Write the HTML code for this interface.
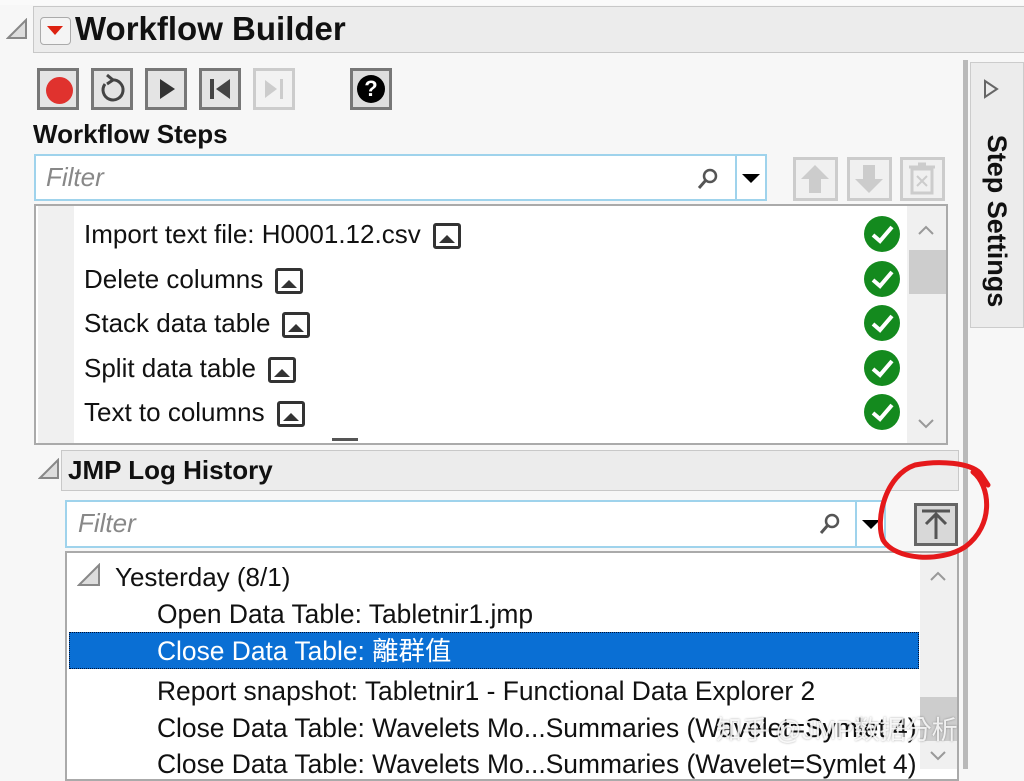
<!DOCTYPE html>
<html><head><meta charset="utf-8"><style>
*{box-sizing:border-box;margin:0;padding:0}
body{width:1024px;height:769px;overflow:hidden;background:#f7f7f7;font-family:"Liberation Sans","Noto Sans CJK TC",sans-serif;position:relative;color:#111}
.a{position:absolute}
.btn{position:absolute;top:68px;width:42px;height:42px;border:3px solid #777;background:#e4e4e4}
.row{position:absolute;left:84px;font-size:26px;line-height:30px;white-space:nowrap}
.img{display:inline-block;width:28px;height:26px;border:3px solid #333;border-radius:3px;vertical-align:middle;margin-left:12px;position:relative;background:#fff}
.img:after{content:"";position:absolute;left:3px;bottom:3px;border-left:8px solid transparent;border-right:8px solid transparent;border-bottom:8px solid #333}
.chk{position:absolute;left:864px;width:36px;height:36px;border-radius:50%;background:#148a1e}
.lr{position:absolute;left:157px;font-size:26.4px;line-height:30px;white-space:nowrap}
</style></head><body>
<div class="a" style="left:0;top:0;width:1024px;height:5px;background:#fafafa"></div>
<svg class="a" style="left:6px;top:18px" width="24" height="22"><path d="M2 20 L20 2 L20 20 Z" fill="#ddd" stroke="#888" stroke-width="2"/></svg>
<div class="a" style="left:33px;top:6px;width:995px;height:47px;background:#ececec;border:1px solid #c8c8c8"></div>
<div class="a" style="left:40px;top:17px;width:31px;height:28px;border:1px solid #aaa;border-radius:4px;background:#f4f4f4"></div>
<svg class="a" style="left:45px;top:24px" width="20" height="12"><path d="M2 2 L18 2 L10 11Z" fill="#d21"/></svg>
<div class="a" style="left:75px;top:10px;font-size:33px;line-height:38px;font-weight:bold">Workflow Builder</div>

<div class="btn" style="left:37px"><div class="a" style="left:6px;top:6px;width:27px;height:27px;border-radius:50%;background:#e0322e"></div></div>
<div class="btn" style="left:91px"><svg width="36" height="36"><path d="M11 13 A10 10 0 1 0 18 9" fill="none" stroke="#444" stroke-width="3"/><path d="M13 4 L19 9 L13 13" fill="none" stroke="#444" stroke-width="3"/></svg></div>
<div class="btn" style="left:145px"><svg width="36" height="36"><path d="M12 8 L27 18 L12 28Z" fill="#333"/></svg></div>
<div class="btn" style="left:199px"><svg width="36" height="36"><rect x="8" y="8" width="4" height="20" fill="#444"/><path d="M28 8 L14 18 L28 28Z" fill="#444"/></svg></div>
<div class="btn" style="left:253px;border-color:#ccc;background:#f2f2f2"><svg width="36" height="36"><path d="M9 9 L21 18 L9 27Z" fill="#ccc"/><rect x="24" y="8" width="3" height="20" fill="#ccc"/></svg></div>
<div class="btn" style="left:350px;background:#ddd"><div class="a" style="left:4px;top:4px;width:28px;height:28px;border-radius:50%;background:#000;color:#fff;font-weight:bold;font-size:22px;text-align:center;line-height:28px">?</div></div>

<div class="a" style="left:33px;top:119px;font-size:26px;line-height:30px;font-weight:bold">Workflow Steps</div>
<div class="a" style="left:34px;top:154px;width:733px;height:47px;background:#fff;border:2px solid #9fd3ec"></div>
<div class="a" style="left:735px;top:154px;width:2px;height:47px;background:#9fd3ec"></div>
<div class="a" style="left:46px;top:162px;font-size:26px;line-height:30px;font-style:italic;color:#888">Filter</div>
<svg class="a" style="left:696px;top:167px" width="24" height="24"><circle cx="14" cy="9" r="6" fill="none" stroke="#555" stroke-width="2.5"/><path d="M10 13 L3 21" stroke="#555" stroke-width="3"/></svg>
<svg class="a" style="left:740px;top:172px" width="22" height="12"><path d="M2 2 L20 2 L11 11Z" fill="#000"/></svg>
<div class="a" style="left:793px;top:157px;width:45px;height:44px;border:3px solid #ccc;background:#f0f0f0"><svg width="39" height="38"><path d="M19 5 L33 19 L25 19 L25 33 L13 33 L13 19 L5 19Z" fill="#ccc"/></svg></div>
<div class="a" style="left:847px;top:157px;width:45px;height:44px;border:3px solid #ccc;background:#f0f0f0"><svg width="39" height="38"><path d="M19 33 L33 19 L25 19 L25 5 L13 5 L13 19 L5 19Z" fill="#ccc"/></svg></div>
<div class="a" style="left:900px;top:157px;width:45px;height:44px;border:3px solid #ccc;background:#f0f0f0"><svg width="39" height="38"><rect x="9" y="9" width="20" height="24" fill="none" stroke="#ccc" stroke-width="3"/><path d="M6 7 H32 M15 4 H23" stroke="#ccc" stroke-width="3"/><path d="M14 16 L24 26 M24 16 L14 26" stroke="#ccc" stroke-width="2"/></svg></div>

<div class="a" style="left:34px;top:204px;width:914px;height:241px;background:#fff;border:2px solid #aaa;overflow:hidden">
<div class="a" style="left:2px;top:0;width:36px;height:240px;background:#f0f0f0"></div>
<div class="a" style="left:871px;top:0;width:40px;height:240px;background:#f0f0f0"></div>
<div class="a" style="left:873px;top:44px;width:38px;height:44px;background:#cdcdcd"></div>
<svg class="a" style="left:880px;top:18px" width="20" height="12"><path d="M3 10 L10 3 L17 10" fill="none" stroke="#999" stroke-width="2"/></svg>
<svg class="a" style="left:880px;top:212px" width="20" height="12"><path d="M3 2 L10 9 L17 2" fill="none" stroke="#999" stroke-width="2"/></svg>
<div class="a" style="left:296px;top:232px;width:26px;height:3px;background:#555"></div>
</div>
<div class="row" style="top:219px">Import text file: H0001.12.csv<span class="img"></span></div>
<div class="row" style="top:264px">Delete columns<span class="img"></span></div>
<div class="row" style="top:308px">Stack data table<span class="img"></span></div>
<div class="row" style="top:353px">Split data table<span class="img"></span></div>
<div class="row" style="top:397px">Text to columns<span class="img"></span></div>
<div class="chk" style="top:216px"></div><div class="chk" style="top:261px"></div><div class="chk" style="top:305px"></div><div class="chk" style="top:350px"></div><div class="chk" style="top:394px"></div>
<svg class="a" style="left:864px;top:216px" width="36" height="216"><g fill="none" stroke="#fff" stroke-width="4"><path d="M9 19 L16 25 L28 11"/><path d="M9 64 L16 70 L28 56"/><path d="M9 108 L16 114 L28 100"/><path d="M9 153 L16 159 L28 145"/><path d="M9 197 L16 203 L28 189"/></g></svg>

<div class="a" style="left:963px;top:60px;width:5px;height:709px;background:#b9b9b9"></div>
<div class="a" style="left:970px;top:62px;width:54px;height:266px;background:#ececec;border:1px solid #ccc"></div>
<svg class="a" style="left:982px;top:78px" width="18" height="22"><path d="M3 3 L15 11 L3 19Z" fill="none" stroke="#666" stroke-width="2"/></svg>
<div class="a" style="left:897px;top:203px;width:200px;height:36px;line-height:36px;font-size:27px;font-weight:bold;white-space:nowrap;text-align:center;transform:rotate(90deg)">Step Settings</div>

<svg class="a" style="left:38px;top:458px" width="22" height="22"><path d="M2 20 L20 2 L20 20 Z" fill="#ddd" stroke="#888" stroke-width="2"/></svg>
<div class="a" style="left:61px;top:450px;width:898px;height:41px;background:#ececec;border:1px solid #c8c8c8"></div>
<div class="a" style="left:68px;top:455px;font-size:26px;line-height:30px;font-weight:bold">JMP Log History</div>
<div class="a" style="left:65px;top:500px;width:821px;height:48px;background:#fff;border:2px solid #9fd3ec"></div>
<div class="a" style="left:855px;top:500px;width:2px;height:48px;background:#9fd3ec"></div>
<div class="a" style="left:78px;top:508px;font-size:26px;line-height:30px;font-style:italic;color:#888">Filter</div>
<svg class="a" style="left:818px;top:512px" width="24" height="24"><circle cx="14" cy="9" r="6" fill="none" stroke="#555" stroke-width="2.5"/><path d="M10 13 L3 21" stroke="#555" stroke-width="3"/></svg>
<svg class="a" style="left:860px;top:518px" width="22" height="12"><path d="M2 2 L20 2 L11 11Z" fill="#000"/></svg>
<div class="a" style="left:914px;top:503px;width:44px;height:43px;border:3px solid #666;background:#d8d8d8"><svg width="38" height="37"><path d="M5 5 H33 M19 33 V8 M9 18 L19 8 L29 18" fill="none" stroke="#555" stroke-width="3"/></svg></div>

<div class="a" style="left:65px;top:551px;width:894px;height:230px;background:#fff;border:2px solid #aaa"></div>
<div class="a" style="left:920px;top:553px;width:37px;height:216px;background:#f0f0f0"></div>
<div class="a" style="left:920px;top:697px;width:37px;height:44px;background:#cdcdcd"></div>
<svg class="a" style="left:928px;top:570px" width="20" height="12"><path d="M3 10 L10 3 L17 10" fill="none" stroke="#999" stroke-width="2"/></svg>
<svg class="a" style="left:928px;top:750px" width="20" height="12"><path d="M3 2 L10 9 L17 2" fill="none" stroke="#999" stroke-width="2"/></svg>
<svg class="a" style="left:77px;top:563px" width="24" height="24"><path d="M2 22 L22 2 L22 22 Z" fill="#ddd" stroke="#888" stroke-width="2"/></svg>
<div class="a" style="left:115px;top:562px;font-size:26px;line-height:30px">Yesterday (8/1)</div>
<div class="lr" style="top:599px">Open Data Table: Tabletnir1.jmp</div>
<div class="a" style="left:69px;top:632px;width:850px;height:37px;background:#0a6fd4;border:1px dotted #013"></div>
<div class="lr" style="top:636px;color:#fff">Close Data Table: 離群值</div>
<div class="lr" style="top:676px">Report snapshot: Tabletnir1 - Functional Data Explorer 2</div>
<div class="lr" style="top:713px">Close Data Table: Wavelets Mo...Summaries (Wavelet=Symlet 4)</div>
<div class="lr" style="top:749px">Close Data Table: Wavelets Mo...Summaries (Wavelet=Symlet 4)</div>
<div class="a" style="left:716px;top:710px;font-size:26px;color:rgba(255,255,255,0.85);text-shadow:0 0 2px rgba(0,0,0,0.35)">知乎 @JMP数据分析</div>

<svg class="a" style="left:870px;top:455px" width="130" height="115"><path d="M103 17 C 120 30, 125 70, 95 92 C 70 108, 25 105, 13 85 C 5 65, 15 20, 45 10 C 70 5, 100 8, 110 18 L 118 30" fill="none" stroke="#e5191b" stroke-width="5" stroke-linecap="round"/></svg>
</body></html>
